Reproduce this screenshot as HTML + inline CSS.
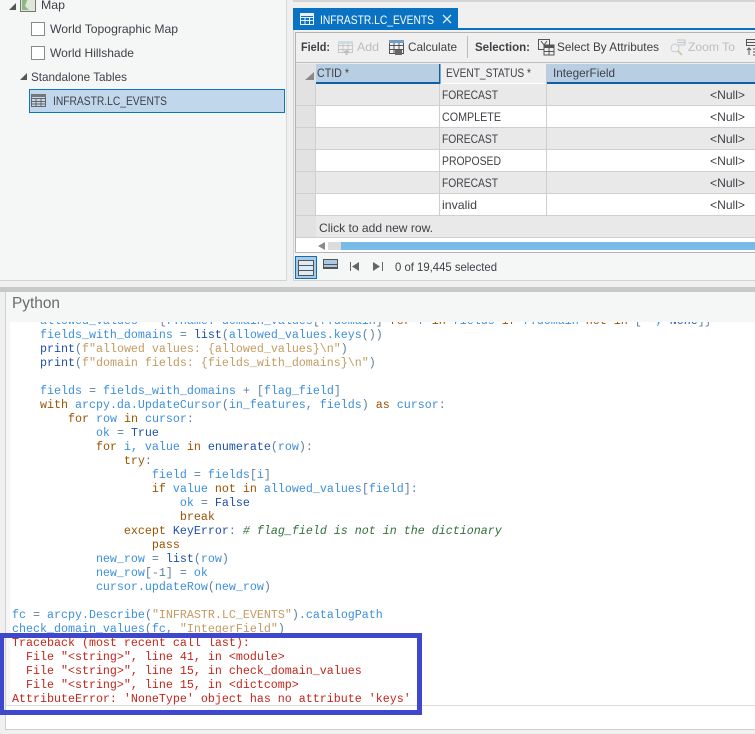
<!DOCTYPE html>
<html><head><meta charset="utf-8"><style>
html,body{margin:0;padding:0;width:755px;height:734px;overflow:hidden;background:#f0f0f0}
svg{position:absolute;left:0;top:0}
svg text{font-family:"Liberation Sans",sans-serif;font-size:12px;fill:#3f3f46}
.g{fill:#bdbdbd}
.b{font-weight:bold}
#c{position:absolute;left:0;top:322px;width:755px;height:383px;overflow:hidden}
pre{position:absolute;left:12px;top:-8px;margin:0;font:11.67px/14px "Liberation Mono",monospace;color:#3d8fdb}
i{font-style:normal}
.k{color:#9a5200}.u{color:#1f4fa8}.s{color:#c49a62}.o{color:#5f7f9c}.r{color:#c3261c}.m{color:#2f6f3a;font-style:italic}
#box{position:absolute;left:-1px;top:633px;width:413px;height:72px;border:5px solid #3f48cc}
</style></head><body>
<svg width="755" height="734" viewBox="0 0 755 734">
<rect width="755" height="734" fill="#f0f0f0"/>
<!-- left pane -->
<rect x="0" y="0" width="287" height="280" fill="#f5f7f6"/>
<rect x="0" y="280" width="287" height="1" fill="#d2d2d2"/>
<rect x="286" y="0" width="1" height="281" fill="#d8d8d8"/>
<path d="M9 10h7V3z" fill="#555"/>
<rect x="20.500" y="-3.500" width="15" height="15" fill="#dfe8d8" stroke="#777"/>
<path d="M22-2h6l-3 8 4 4h-7z" fill="#8fb884"/>
<text x="41" y="9" textLength="24" lengthAdjust="spacingAndGlyphs">Map</text>
<rect x="31.500" y="22.500" width="13" height="13" fill="#fff" stroke="#8a8a8a"/>
<text x="50" y="33" textLength="128" lengthAdjust="spacingAndGlyphs">World Topographic Map</text>
<rect x="31.500" y="46.500" width="13" height="13" fill="#fff" stroke="#8a8a8a"/>
<text x="50" y="57" textLength="84" lengthAdjust="spacingAndGlyphs">World Hillshade</text>
<path d="M20 80h7v-7z" fill="#555"/>
<text x="31" y="81" textLength="96" lengthAdjust="spacingAndGlyphs">Standalone Tables</text>
<rect x="29.500" y="89.500" width="255" height="23" fill="#c1d8ec" stroke="#0f75bd"/>
<g fill="none" stroke="#666"><rect x="31.500" y="95.500" width="14" height="11"/><path d="M31 98.500h15M31 101.500h15M31 104h15M36 98v8M41 98v8"/></g>
<rect x="31" y="94" width="15" height="3" fill="#777"/>
<text x="53" y="105" textLength="114" lengthAdjust="spacingAndGlyphs">INFRASTR.LC_EVENTS</text>
<!-- right pane -->
<rect x="293" y="0" width="462" height="2" fill="#d4d4d4"/>
<rect x="293" y="30" width="1" height="251" fill="#d2d2d2"/>
<rect x="293" y="8" width="165" height="21" fill="#0a72c2"/>
<rect x="293" y="28" width="462" height="2" fill="#0a72c2"/>
<g fill="none" stroke="#e8f2fa"><rect x="300.500" y="14.500" width="13" height="10"/><path d="M300 17.500h14M300 20.500h14M305 17v8M309.500 17v8"/></g>
<rect x="300" y="13" width="14" height="3" fill="#e8f2fa"/>
<text x="320" y="24" textLength="114" lengthAdjust="spacingAndGlyphs" style="fill:#fff">INFRASTR.LC_EVENTS</text>
<path d="M443 15l8 8M451 15l-8 8" stroke="#dcecf8" stroke-width="1.300"/>
<rect x="295.500" y="32.500" width="461" height="220" fill="#f0f0f0" stroke="#b4b4b4"/>
<rect x="296" y="33" width="459" height="29" fill="#f0f0f0"/>
<rect x="296" y="62" width="459" height="1" fill="#bdbdbd"/>
<text x="301" y="51" textLength="29" lengthAdjust="spacingAndGlyphs" class="b">Field:</text>
<g fill="none" stroke="#c7c7c7"><rect x="338.500" y="41.500" width="14" height="11"/><path d="M338 45.500h15M338 49.500h15M343 42v11M348 42v11"/></g>
<rect x="338" y="41" width="15" height="3" fill="#cfdbe3"/>
<path d="M344 52h5M346.500 50v5" stroke="#c0c0c0" stroke-width="2"/>
<text x="357" y="51" textLength="22" lengthAdjust="spacingAndGlyphs" class="g">Add</text>
<g fill="none" stroke="#555"><rect x="389.500" y="41.500" width="14" height="12"/><path d="M389 45.500h15M389 49.500h15M394 42v11M399 42v11"/></g>
<rect x="389" y="40" width="15" height="3" fill="#6f9fc4"/>
<rect x="395" y="50" width="7" height="5" fill="#666"/>
<text x="408" y="51" textLength="49" lengthAdjust="spacingAndGlyphs">Calculate</text>
<rect x="467" y="36" width="1" height="22" fill="#bdbdbd"/>
<text x="475" y="51" textLength="55" lengthAdjust="spacingAndGlyphs" class="b">Selection:</text>
<g fill="none" stroke="#555"><rect x="538.500" y="39.500" width="11" height="10" fill="#f0f0f0"/><path d="M541 41l3 4 3-4"/></g>
<rect x="544" y="45" width="10" height="10" fill="#f0f0f0" stroke="#555"/>
<rect x="544" y="45" width="10" height="3" fill="#555"/>
<path d="M544 51.500h10M549 48v7" stroke="#555"/>
<text x="557" y="51" textLength="102" lengthAdjust="spacingAndGlyphs">Select By Attributes</text>
<g fill="none" stroke="#c4c4c4"><path d="M677 40h8v5h-8M677 42.500h8"/><circle cx="675" cy="48" r="4" stroke="#b9cfdd"/><path d="M678 51l4 4" stroke="#d8c8a8" stroke-width="2"/></g>
<text x="688" y="51" textLength="47" lengthAdjust="spacingAndGlyphs" class="g">Zoom To</text>
<g fill="none" stroke="#555"><rect x="746.500" y="39.500" width="10" height="6"/><path d="M746 42.500h10"/><path d="M749 48v7M747 50l2-2 2 2M753 49h3M753 52h3M753 55h3"/></g>
<!-- table -->
<rect x="296" y="64" width="459" height="188" fill="#fff"/>
<rect x="296" y="64" width="20" height="152" fill="#e2e2e2"/>
<rect x="316" y="64" width="124" height="19" fill="#b8cfe3"/>
<rect x="316" y="82" width="124" height="2" fill="#0f5fa8"/>
<rect x="440" y="64" width="107" height="19" fill="#efefef"/>
<rect x="547" y="64" width="208" height="19" fill="#b8cfe3"/>
<rect x="547" y="82" width="208" height="2" fill="#0f5fa8"/>
<rect x="439" y="64" width="1.500" height="20" fill="#0f5fa8"/>
<rect x="546" y="64" width="1" height="20" fill="#c9c9c9"/>
<path d="M305 80h9v-8z" fill="#8a8a8a"/>
<text x="317" y="77" textLength="32" lengthAdjust="spacingAndGlyphs">CTID *</text>
<text x="446" y="77" textLength="85" lengthAdjust="spacingAndGlyphs">EVENT_STATUS *</text>
<text x="553" y="77" textLength="62" lengthAdjust="spacingAndGlyphs">IntegerField</text>
<g fill="#e9e9e9">
<rect x="316" y="84" width="439" height="21"/><rect x="316" y="128" width="439" height="21"/><rect x="316" y="172" width="439" height="21"/>
<rect x="316" y="216" width="439" height="21"/></g>
<g fill="#cfcfcf">
<rect x="296" y="105" width="459" height="1"/><rect x="296" y="127" width="459" height="1"/><rect x="296" y="149" width="459" height="1"/><rect x="296" y="171" width="459" height="1"/><rect x="296" y="193" width="459" height="1"/><rect x="296" y="215" width="459" height="1"/><rect x="296" y="237" width="459" height="1"/>
<rect x="315" y="84" width="1" height="154"/>
<rect x="439" y="84" width="1" height="132"/><rect x="546" y="84" width="1" height="132"/></g>
<rect x="296" y="216" width="20" height="21" fill="#e2e2e2"/>
<text x="442" y="99" textLength="56" lengthAdjust="spacingAndGlyphs">FORECAST</text>
<text x="442" y="121" textLength="59" lengthAdjust="spacingAndGlyphs">COMPLETE</text>
<text x="442" y="143" textLength="56" lengthAdjust="spacingAndGlyphs">FORECAST</text>
<text x="442" y="165" textLength="59" lengthAdjust="spacingAndGlyphs">PROPOSED</text>
<text x="442" y="187" textLength="56" lengthAdjust="spacingAndGlyphs">FORECAST</text>
<text x="442" y="209" textLength="35" lengthAdjust="spacingAndGlyphs">invalid</text>
<text x="710" y="99" textLength="35" lengthAdjust="spacingAndGlyphs">&lt;Null&gt;</text>
<text x="710" y="121" textLength="35" lengthAdjust="spacingAndGlyphs">&lt;Null&gt;</text>
<text x="710" y="143" textLength="35" lengthAdjust="spacingAndGlyphs">&lt;Null&gt;</text>
<text x="710" y="165" textLength="35" lengthAdjust="spacingAndGlyphs">&lt;Null&gt;</text>
<text x="710" y="187" textLength="35" lengthAdjust="spacingAndGlyphs">&lt;Null&gt;</text>
<text x="710" y="209" textLength="35" lengthAdjust="spacingAndGlyphs">&lt;Null&gt;</text>
<text x="319" y="232" textLength="114" lengthAdjust="spacingAndGlyphs">Click to add new row.</text>
<path d="M318 246l7-4v8z" fill="#8a8a8a"/>
<rect x="328" y="242" width="13" height="8" fill="#dcdcdc"/>
<rect x="341" y="242" width="414" height="8" fill="#78bbe7"/>
<rect x="295" y="252" width="460" height="1" fill="#b4b4b4"/>
<!-- status bar -->
<rect x="294" y="253" width="461" height="27" fill="#f5f7f6"/>
<rect x="293" y="280" width="462" height="1" fill="#d2d2d2"/>
<rect x="295.500" y="256.500" width="21" height="22" fill="#a9c9e4" stroke="#0b6fb8"/>
<g stroke="#555" fill="#d9ecf8"><rect x="298.500" y="260.500" width="15" height="15"/><path d="M298 265.500h16M298 270.500h16" fill="none"/></g>
<g stroke="#555" fill="#a9c9e4"><rect x="323.500" y="259.500" width="14" height="9"/><path d="M323 264.500h15" fill="none"/></g>
<rect x="323" y="267" width="15" height="1.500" fill="#555"/>
<path d="M350.500 262v9" stroke="#666"/><path d="M359 262v9l-7-4.500z" fill="#666"/>
<path d="M382.500 262v9" stroke="#666"/><path d="M373 262v9l7-4.500z" fill="#666"/>
<text x="395" y="271" textLength="102" lengthAdjust="spacingAndGlyphs">0 of 19,445 selected</text>
<!-- python pane -->
<rect x="0" y="287" width="755" height="5" fill="#c8c8c8"/>
<rect x="5" y="292" width="750" height="30" fill="#f5f7f6"/>
<rect x="5" y="292" width="1" height="438" fill="#d0d0d0"/>
<text x="12" y="308" textLength="48" lengthAdjust="spacingAndGlyphs" style="font-size:16px;fill:#6a6a6a">Python</text>
<rect x="6" y="322" width="749" height="407" fill="#fff"/>
<rect x="6" y="322" width="4" height="383" fill="#f6f6f6"/>
<rect x="6" y="705" width="749" height="1" fill="#dcdcdc"/>
<rect x="5" y="729" width="750" height="1" fill="#d0d0d0"/>
</svg>
<div id="c"><pre>    allowed_values <i class="o">=</i> <i class="o">{</i>f.name: domain_values<i class="o">[</i>f.domain<i class="o">]</i> <i class="k">for</i> f <i class="k">in</i> fields <i class="k">if</i> f.domain <i class="k">not</i> <i class="k">in</i> <i class="o">[</i><i class="s">""</i>, <i class="u">None</i><i class="o">]}</i>
    fields_with_domains <i class="o">=</i> <i class="u">list</i><i class="o">(</i>allowed_values.keys<i class="o">())</i>
    <i class="u">print</i><i class="o">(</i><i class="s">f"allowed values: {allowed_values}\n"</i><i class="o">)</i>
    <i class="u">print</i><i class="o">(</i><i class="s">f"domain fields: {fields_with_domains}\n"</i><i class="o">)</i>

    fields <i class="o">=</i> fields_with_domains <i class="o">+</i> <i class="o">[</i>flag_field<i class="o">]</i>
    <i class="k">with</i> arcpy.da.UpdateCursor<i class="o">(</i>in_features, fields<i class="o">)</i> <i class="k">as</i> cursor<i class="o">:</i>
        <i class="k">for</i> row <i class="k">in</i> cursor<i class="o">:</i>
            ok <i class="o">=</i> <i class="u">True</i>
            <i class="k">for</i> i, value <i class="k">in</i> <i class="u">enumerate</i><i class="o">(</i>row<i class="o">):</i>
                <i class="k">try</i><i class="o">:</i>
                    field <i class="o">=</i> fields<i class="o">[</i>i<i class="o">]</i>
                    <i class="k">if</i> value <i class="k">not</i> <i class="k">in</i> allowed_values<i class="o">[</i>field<i class="o">]:</i>
                        ok <i class="o">=</i> <i class="u">False</i>
                        <i class="k">break</i>
                <i class="k">except</i> <i class="u">KeyError</i><i class="o">:</i> <i class="m"># flag_field is not in the dictionary</i>
                    <i class="k">pass</i>
            new_row <i class="o">=</i> <i class="u">list</i><i class="o">(</i>row<i class="o">)</i>
            new_row<i class="o">[-1]</i> <i class="o">=</i> ok
            cursor.updateRow<i class="o">(</i>new_row<i class="o">)</i>

fc <i class="o">=</i> arcpy.Describe<i class="o">(</i><i class="s">"INFRASTR.LC_EVENTS"</i><i class="o">)</i>.catalogPath
check_domain_values<i class="o">(</i>fc, <i class="s">"IntegerField"</i><i class="o">)</i>
<i class="r">Traceback (most recent call last):
  File "&lt;string&gt;", line 41, in &lt;module&gt;
  File "&lt;string&gt;", line 15, in check_domain_values
  File "&lt;string&gt;", line 15, in &lt;dictcomp&gt;
AttributeError: 'NoneType' object has no attribute 'keys'</i></pre></div>
<div id="box"></div>
</body></html>
